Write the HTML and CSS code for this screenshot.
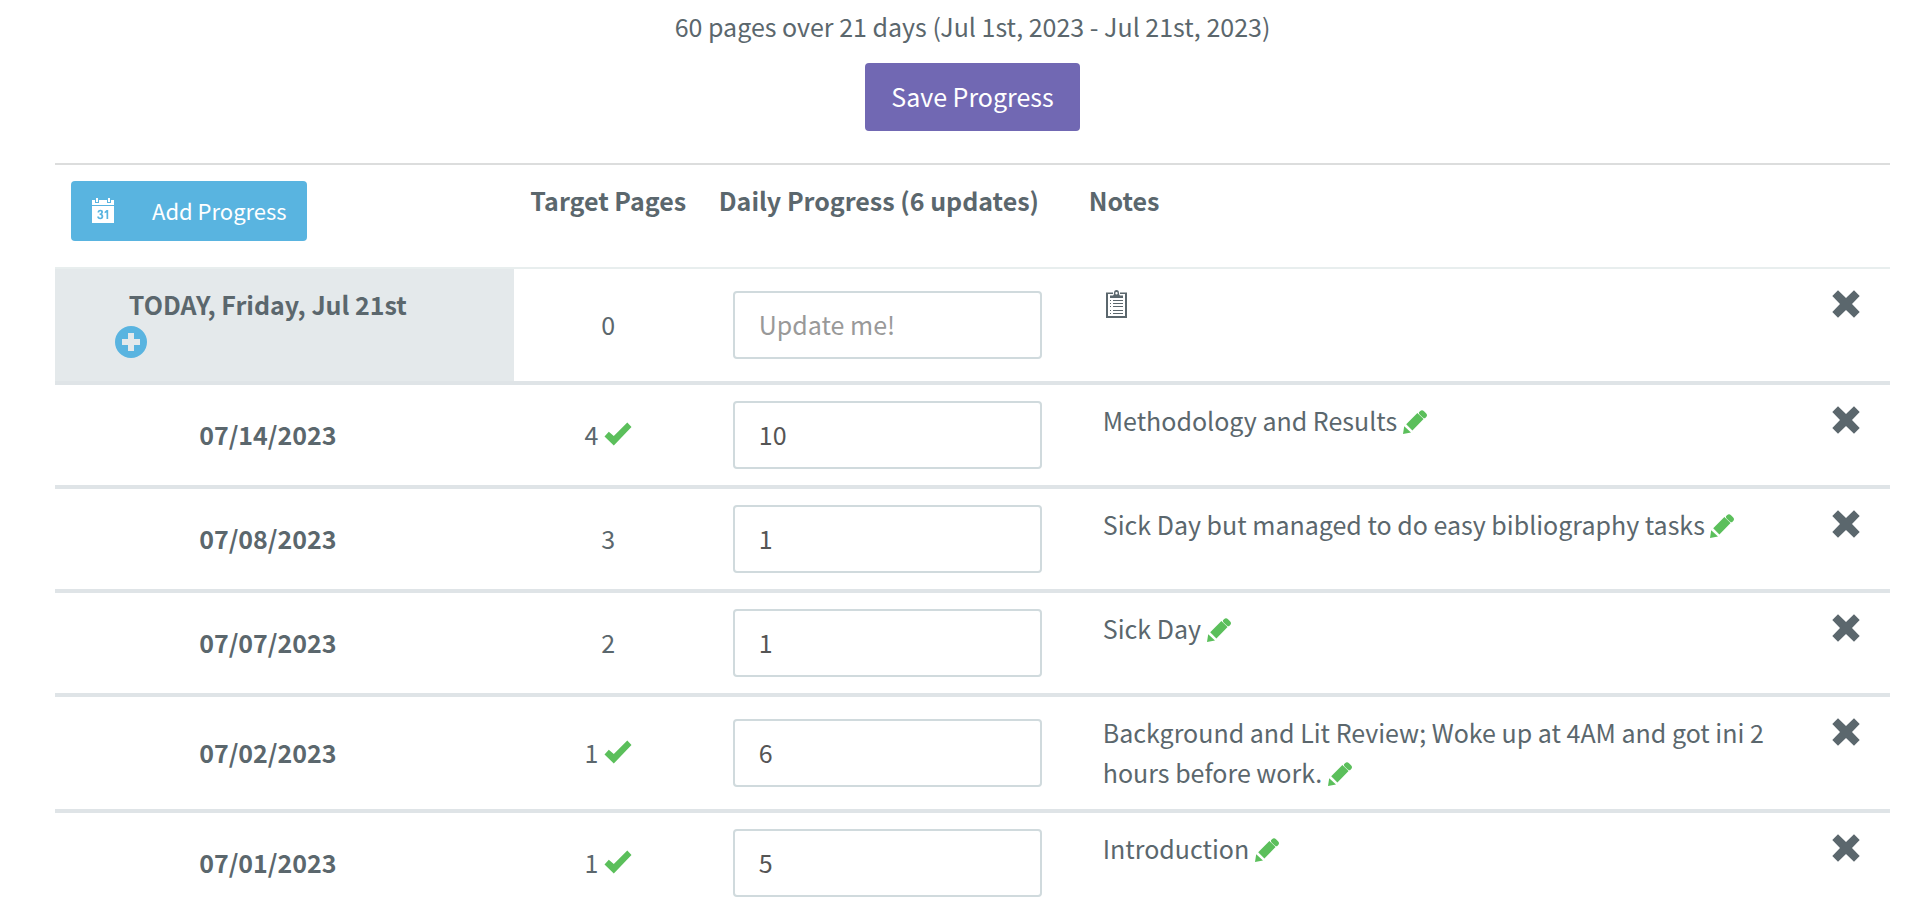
FILE: index.html
```
<!DOCTYPE html>
<html lang="en">
<head>
<meta charset="utf-8">
<title>Progress</title>
<link rel="stylesheet" href="styles.css">
</head>
<body>
<svg width="0" height="0" class="sprite" aria-hidden="true">
  <symbol id="remove" viewBox="0 0 28 28"><path d="M6 0.3 14 8 22 0.3 27.7 6 20 14 27.7 22 22 27.7 14 20 6 27.7 0.3 22 8 14 0.3 6Z"/></symbol>
  <symbol id="check" viewBox="0 0 28 24"><path d="M0.5 14.5 4.8 9.8 9.8 14 23.3 0.5 27.5 5 9.8 23.5Z"/></symbol>
  <symbol id="pencil" viewBox="0 0 24 24"><path d="M0 24 1.2 16.200 8 22.600ZM3.200 14.200 14.400 3 20.600 9 9.400 20.400ZM16 2.200 17 1.200Q19-.8 21 1.200L23 3.200Q25 5.200 23 7.200L22 8.200Q20.800 8.600 19.800 7.600L16.600 4.400Q15.600 3.400 16 2.200Z"/></symbol>
  <symbol id="clipboard" viewBox="0 0 21 28"><path fill-rule="evenodd" d="M0 2.5H7V4H2V26H19V4H14V2.5H21V28H0ZM4 8V5.5H7Q8 5 8 3 8 0 10.5 0 13 0 13 3 13 5 14 5.500H17V8ZM10.5 2A1.2 1.2 0 1 0 10.5 4.4 1.2 1.2 0 1 0 10.5 2Z"/><path d="M4 10H5V11H4ZM7 10H17V11H7ZM4 13H5V14H4ZM7 13H17V14H7ZM4 16H5V17H4ZM7 16H17V17H7ZM4 20H5V21H4ZM7 20H17V21H7ZM4 23H5V24H4ZM7 23H17V24H7Z"/></symbol>
</svg>
<main class="page">
  <p class="summary">60 pages over 21 days (Jul 1st, 2023 - Jul 21st, 2023)</p>
  <button class="save" type="button">Save Progress</button>
  <table class="log">
    <colgroup><col class="c-date"><col class="c-target"><col class="c-daily"><col><col class="c-remove"></colgroup>
    <thead>
      <tr>
        <th class="add-cell"><button class="add" type="button"><svg class="calendar" viewBox="0 0 22 25" aria-hidden="true"><path fill-rule="evenodd" d="M0 2H3V5H7V2H15V5H19V2H22V7H0ZM4 0H6V4H4ZM16 0H18V4H16ZM0 8H22V25H0ZM5.500 14.500Q5.700 11.800 8.300 11.800 11 11.800 11 14.200 11 15.500 9.900 16 11.300 16.600 11.300 18.300 11.300 21.200 8.300 21.200 5.300 21.200 5.200 18.500H7Q7.200 19.700 8.300 19.700 9.500 19.700 9.500 18.300 9.500 16.900 7.600 16.900V15.500Q9.200 15.500 9.200 14.300 9.200 13.300 8.300 13.300 7.300 13.300 7.200 14.500ZM14.500 12H16.200V21H14.500V14.500L12.600 15.300V13.700Z"/></svg>Add Progress</button></th>
        <th class="target">Target Pages</th>
        <th>Daily Progress (6 updates)</th>
        <th class="notes-head">Notes</th>
        <td></td>
      </tr>
    </thead>
    <tbody>
      <tr>
        <th class="date today" scope="row">TODAY, Friday, Jul 21st<button class="icon-button plus" type="button" aria-label="Add an update for today"><svg viewBox="0 0 32 32"><path fill-rule="evenodd" d="M16 0A16 16 0 1 0 16 32 16 16 0 1 0 16 0ZM13 7H19V13H25V19H19V25H13V19H7V13H13Z"/></svg></button></th>
        <td class="target">0</td>
        <td class="daily"><input type="text" placeholder="Update me!" aria-label="Progress today"></td>
        <td class="notes"><button class="icon-button clip" type="button" aria-label="Add note"><svg><use href="#clipboard"/></svg></button></td>
        <td class="remove"><button class="icon-button cross" type="button" aria-label="Remove today"><svg><use href="#remove"/></svg></button></td>
      </tr>
      <tr>
        <th class="date" scope="row">07/14/2023</th>
        <td class="target">4 <svg class="check" aria-label="Target met"><use href="#check"/></svg></td>
        <td class="daily"><input type="text" value="10" aria-label="Progress 07/14/2023"></td>
        <td class="notes">Methodology and Results <button class="icon-button pencil" type="button" aria-label="Edit note"><svg><use href="#pencil"/></svg></button></td>
        <td class="remove"><button class="icon-button cross" type="button" aria-label="Remove 07/14/2023"><svg><use href="#remove"/></svg></button></td>
      </tr>
      <tr>
        <th class="date" scope="row">07/08/2023</th>
        <td class="target">3</td>
        <td class="daily"><input type="text" value="1" aria-label="Progress 07/08/2023"></td>
        <td class="notes">Sick Day but managed to do easy bibliography tasks <button class="icon-button pencil" type="button" aria-label="Edit note"><svg><use href="#pencil"/></svg></button></td>
        <td class="remove"><button class="icon-button cross" type="button" aria-label="Remove 07/08/2023"><svg><use href="#remove"/></svg></button></td>
      </tr>
      <tr>
        <th class="date" scope="row">07/07/2023</th>
        <td class="target">2</td>
        <td class="daily"><input type="text" value="1" aria-label="Progress 07/07/2023"></td>
        <td class="notes">Sick Day <button class="icon-button pencil" type="button" aria-label="Edit note"><svg><use href="#pencil"/></svg></button></td>
        <td class="remove"><button class="icon-button cross" type="button" aria-label="Remove 07/07/2023"><svg><use href="#remove"/></svg></button></td>
      </tr>
      <tr>
        <th class="date" scope="row">07/02/2023</th>
        <td class="target">1 <svg class="check" aria-label="Target met"><use href="#check"/></svg></td>
        <td class="daily"><input type="text" value="6" aria-label="Progress 07/02/2023"></td>
        <td class="notes">Background and Lit Review; Woke up at 4AM and got ini 2 hours before work. <button class="icon-button pencil" type="button" aria-label="Edit note"><svg><use href="#pencil"/></svg></button></td>
        <td class="remove"><button class="icon-button cross" type="button" aria-label="Remove 07/02/2023"><svg><use href="#remove"/></svg></button></td>
      </tr>
      <tr>
        <th class="date" scope="row">07/01/2023</th>
        <td class="target">1 <svg class="check" aria-label="Target met"><use href="#check"/></svg></td>
        <td class="daily"><input type="text" value="5" aria-label="Progress 07/01/2023"></td>
        <td class="notes">Introduction <button class="icon-button pencil" type="button" aria-label="Edit note"><svg><use href="#pencil"/></svg></button></td>
        <td class="remove"><button class="icon-button cross" type="button" aria-label="Remove 07/01/2023"><svg><use href="#remove"/></svg></button></td>
      </tr>
    </tbody>
  </table>
</main>
</body>
</html>
```
FILE: styles.css
```
* { box-sizing: border-box; }

body {
  margin: 0;
  background: #fff;
  color: #5b676d;
  font: 25px/40px "Noto Sans CJK SC", "Open Sans", sans-serif;
}

button, input { font: inherit; }
button { border: 0; cursor: pointer; }
.sprite { display: none; }

.page {
  display: flex;
  flex-direction: column;
  align-items: center;
  padding: 6px 24px 0 55px;
}

.summary { margin: 0 0 17px; }

.save {
  padding: 13px 26px 15px;
  border-radius: 4px;
  background: #7168b3;
  color: #fff;
}

.log {
  width: 100%;
  margin-top: 32px;
  border-collapse: separate;
  border-spacing: 0;
  border-top: 2px solid #dcdddd;
  table-layout: fixed;
}

.c-date { width: 25%; }
.c-target { width: 189px; }
.c-daily { width: 355px; }
.c-remove { width: 88px; }

th, td { padding: 15px 16px 17px; vertical-align: top; text-align: left; }
thead th, thead td { border-bottom: 2px solid #e8eeee; }
thead th { white-space: nowrap; }
tbody th, tbody td { border-bottom: 4px solid #dfe4e7; }
tbody tr:last-child > * { border-bottom: 0; }
.log .add-cell { padding-top: 16px; padding-bottom: 26px; }
.log .notes-head { padding-left: 31px; }

.add {
  display: flex;
  align-items: center;
  gap: 38px;
  height: 60px;
  padding: 0 20px 2px 21px;
  border-radius: 4px;
  background: #59b4e0;
  color: #fff;
  font-size: 22px;
  font-weight: 400;
}

svg { fill: currentColor; }
.calendar { width: 22px; height: 25px; }

.log .date { padding-right: 49px; text-align: center; vertical-align: middle; }
.log .today { background: #e4e9eb; }
.log .target { text-align: center; }
tbody .target { vertical-align: middle; }
.log .daily { padding-top: 16px; padding-bottom: 16px; padding-left: 30px; vertical-align: middle; }
.log .notes { padding-left: 45px; }
.log .remove { text-align: center; }

input {
  display: block;
  width: 100%;
  height: 68px;
  padding: 0 24px 2px;
  border: 2px solid #d0dadd;
  border-radius: 4px;
  background: #fff;
  color: #555;
}
input::placeholder { color: #999; opacity: 1; }

.icon-button { padding: 0; background: none; color: inherit; line-height: 0; }
.icon-button svg { display: block; width: 100%; height: 100%; }
.plus { display: block; width: 32px; height: 32px; margin: 2px 0 6px 44px; color: #59b4e0; }
.clip { display: block; width: 21px; height: 28px; margin: 6px 0 0 3px; }
.cross { display: block; width: 28px; height: 28px; margin: 6px auto 0; }
.pencil { width: 24px; height: 24px; color: #5bbf5b; vertical-align: -3px; }
.check { width: 28px; height: 24px; fill: #5bbf5b; vertical-align: -1px; }
```
